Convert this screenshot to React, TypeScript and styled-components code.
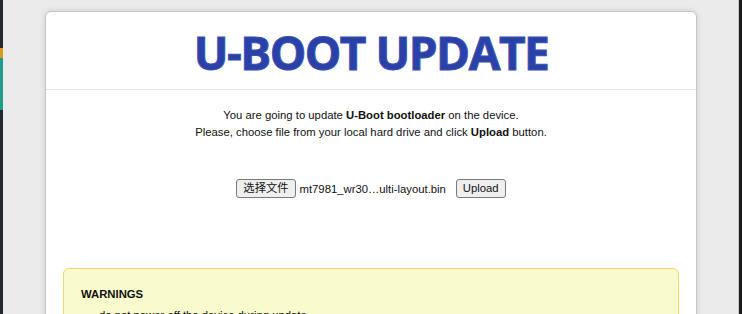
import styled, { createGlobalStyle } from "styled-components";

const GlobalStyle = createGlobalStyle`
    html, body {
        margin: 0;
        padding: 0;
        background: #ebebeb;
        overflow: hidden;
    }
    body {
        font-family: "Liberation Sans", Arial, sans-serif;
        font-size: 11.3px;
        color: #111;
    }
`;

const Screen = styled.div({
    display: 'flex',
    height: 314,
    width: 742,
})

const LeftEdge = styled.div({
    width: 3,
    flexShrink: 0,
    background: 'linear-gradient(to bottom, #23292e 0, #23292e 48px, #d99a1c 48px, #d99a1c 58px, #1f9c8a 58px, #1f9c8a 110px, #23292e 110px)',
})

const RightEdge = styled.div({
    width: 3,
    flexShrink: 0,
    background: '#1c1c1c',
    borderLeft: '1px solid #c9c9c9',
})

const Main = styled.div({
    flex: 1,
    paddingTop: 11,
    overflow: 'hidden',
})

const Card = styled.div({
    width: 652,
    marginLeft: 42,
    boxSizing: 'border-box',
    background: '#fff',
    border: '1px solid #c4c4c4',
    borderRadius: 6,
    boxShadow: '0 0 6px rgba(0, 0, 0, 0.12)',
})

const Header = styled.header({
    height: 77,
    display: 'flex',
    alignItems: 'center',
    justifyContent: 'center',
    borderBottom: '1px solid #e2e2e2',
})

const Title = styled.h1({
    margin: 0,
    fontFamily: '"Open Sans", "Noto Sans", sans-serif',
    fontWeight: 700,
    fontSize: 46,
    letterSpacing: '-1.5px',
    color: '#2a42a8',
    WebkitTextStroke: '1px #3a51b0',
    lineHeight: 1,
    paddingTop: 2,
})

const Body = styled.div({
    padding: '17px 17px 0',
})

const Intro = styled.p({
    margin: 0,
    textAlign: 'center',
    lineHeight: '17px',
})

const UploadRow = styled.form({
    display: 'flex',
    alignItems: 'center',
    justifyContent: 'center',
    marginTop: 37,
    height: 21,
})

const FormButton = styled.button({
    fontFamily: '"Liberation Sans", "Noto Sans CJK SC", sans-serif',
    fontSize: 11.3,
    color: '#111',
    background: '#efefef',
    border: '1px solid #7a7a7a',
    borderRadius: 3,
    padding: '1px 6px',
    height: 19,
    lineHeight: '15px',
})

const FileName = styled.span({
    margin: '0 10px 0 4px',
})

const Warning = styled.div({
    marginTop: 69,
    background: '#fafbcd',
    border: '1px solid #f6d46f',
    borderRadius: 6,
    padding: '17px 17px 20px',
})

const WarningTitle = styled.strong({
    display: 'block',
    lineHeight: '17px',
})

const WarningList = styled.ul({
    margin: '4px 0 0',
    paddingLeft: 18,
    lineHeight: '17px',
})

export default function App() {
    return (
        <Screen>
            <GlobalStyle />
            <LeftEdge />
            <Main>
                <Card>
                    <Header>
                        <Title>U-BOOT UPDATE</Title>
                    </Header>
                    <Body>
                        <Intro>
                            You are going to update <strong>U-Boot bootloader</strong> on the device.
                            <br />
                            Please, choose file from your local hard drive and click <strong>Upload</strong> button.
                        </Intro>
                        <UploadRow>
                            <FormButton type="button">选择文件</FormButton>
                            <FileName>mt7981_wr30…ulti-layout.bin</FileName>
                            <FormButton type="button">Upload</FormButton>
                        </UploadRow>
                        <Warning>
                            <WarningTitle>WARNINGS</WarningTitle>
                            <WarningList>
                                <li>do not power off the device during update</li>
                            </WarningList>
                        </Warning>
                    </Body>
                </Card>
            </Main>
            <RightEdge />
        </Screen>
    );
}
